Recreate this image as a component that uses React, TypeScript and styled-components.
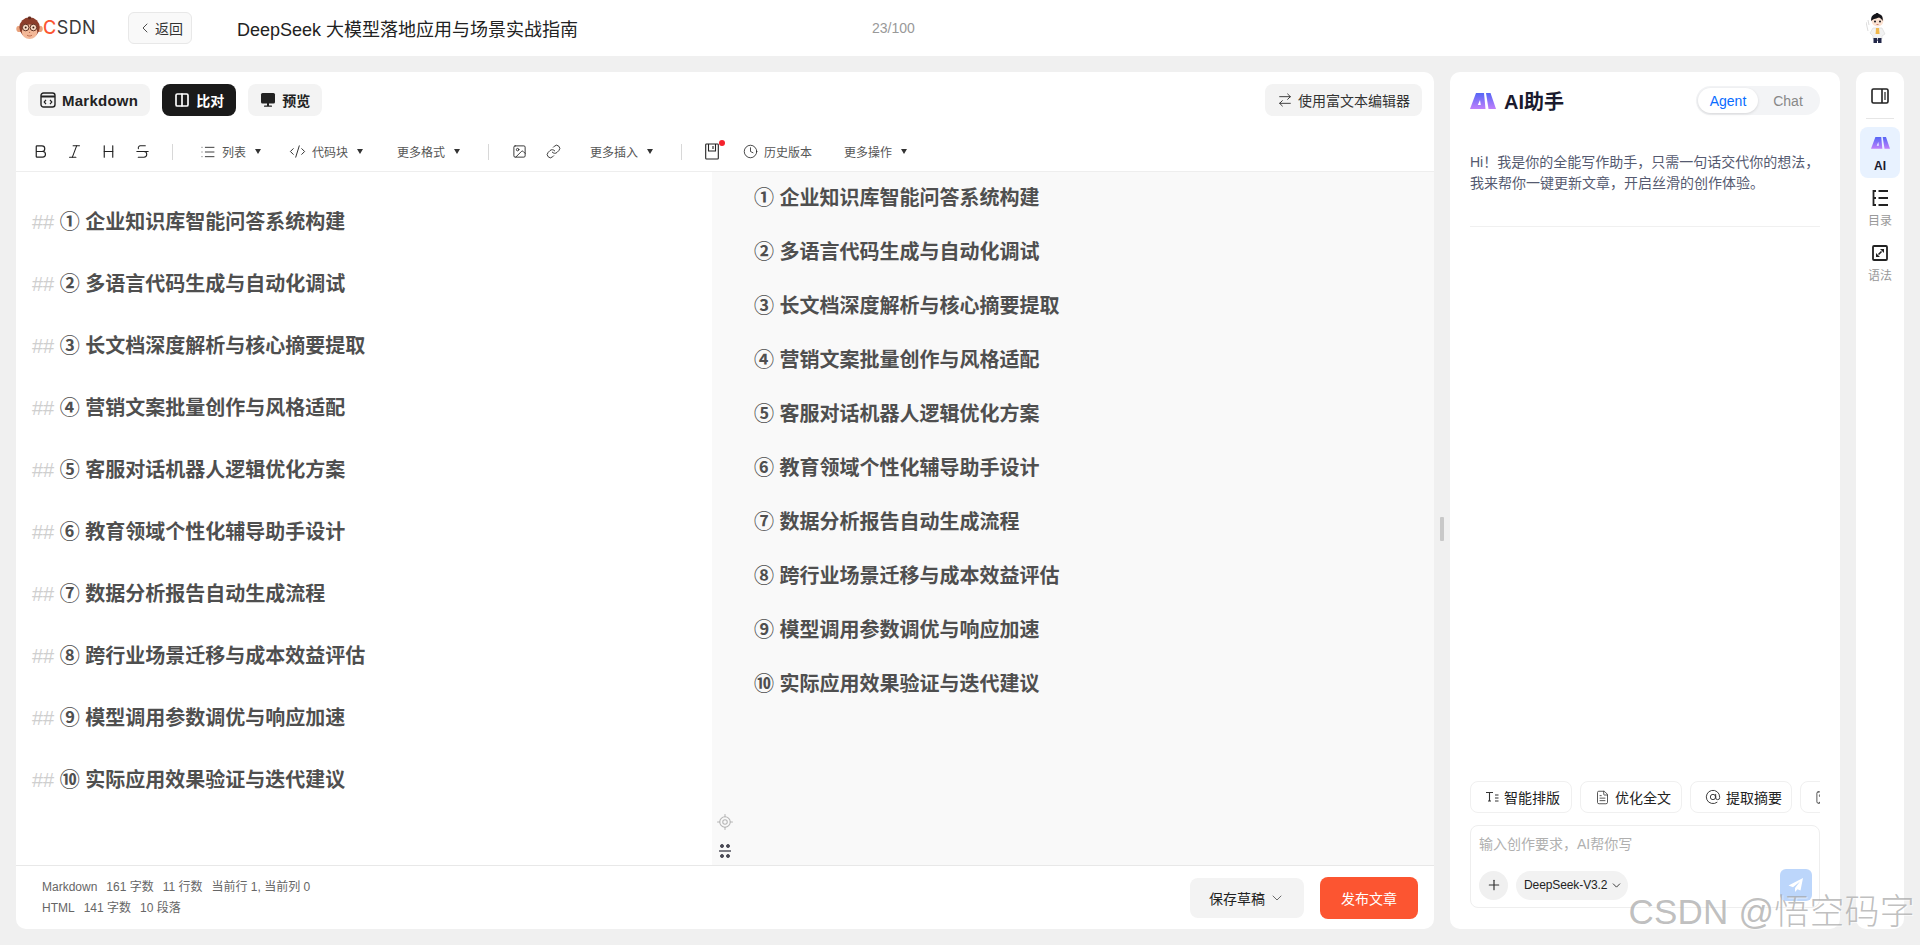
import React from 'react';
import styled, { createGlobalStyle } from 'styled-components';
import {
  AtSign, Bold, ChevronDown, ChevronLeft, Clock, CodeXml, Columns2, FileText, Heading, Image,
  Italic, Link, List, LocateFixed, Plus, Strikethrough, ArrowRightLeft,
} from 'lucide-react';

const GlobalStyle = createGlobalStyle`
  html, body { margin: 0; padding: 0; height: 100%; background: #f0f0f0; }
  body { font-family: "Liberation Sans", "Noto Sans CJK SC", sans-serif; color: #222; overflow: hidden; }
  * { box-sizing: border-box; }
`;

const Page = styled.div`
  position: relative;
  height: 945px;
  display: flex;
  flex-direction: column;
  overflow: hidden;
`;

const Header = styled.header`
  height: 56px;
  flex: none;
  background: #fff;
  display: flex;
  align-items: center;
  padding: 0 32px 0 16px;
`;

const Logo = styled.div`
  width: 80px;
  height: 24px;
  display: flex;
  align-items: center;
`;

const LogoText = styled.span`
  font-family: "Inter", sans-serif;
  font-size: 18px;
  line-height: 24px;
  color: #3a3a3a;
  letter-spacing: 0.4px;
  em { font-style: normal; color: #fc5531; font-weight: 500; }
`;

const BackButton = styled.div`
  width: 64px;
  height: 32px;
  margin-left: 32px;
  border: 1px solid #e8e8e8;
  border-radius: 6px;
  background: #f9f9f9;
  display: flex;
  align-items: center;
  justify-content: center;
  gap: 2px;
  font-size: 14px;
  color: #333;
`;

const TitleField = styled.div`
  width: 635px;
  margin-left: 45px;
  font-size: 18px;
  color: #222;
`;

const TitleCount = styled.span`
  font-size: 14px;
  color: #999;
`;

const AvatarSlot = styled.div`
  margin-left: auto;
  width: 22px;
  height: 32px;
`;

const Main = styled.main`
  flex: 1;
  min-height: 0;
  display: flex;
  gap: 16px;
  padding: 16px;
`;

const EditorCard = styled.section`
  width: 1418px;
  background: #fff;
  border-radius: 10px;
  display: flex;
  flex-direction: column;
  overflow: hidden;
`;

const TabRow = styled.div`
  flex: none;
  height: 61px;
  padding: 12px 12px 0;
  display: flex;
  align-items: flex-start;
  gap: 12px;
`;

const TabButton = styled.div<{ $active?: boolean }>`
  height: 32px;
  padding: 0 12px;
  border-radius: 8px;
  display: flex;
  align-items: center;
  gap: 6px;
  font-size: 14px;
  font-weight: 700;
  background: ${(p) => (p.$active ? '#1a1a1a' : '#f3f3f3')};
  color: ${(p) => (p.$active ? '#fff' : '#222')};
`;

const MarkdownLabel = styled.span`
  font-size: 15px;
  letter-spacing: 0.25px;
`;

const SwitchEditor = styled(TabButton)`
  margin-left: auto;
  width: 157px;
  font-weight: 400;
  color: #333;
  padding: 0 11px 0 12px;
  gap: 5px;
`;

const Toolbar = styled.div`
  flex: none;
  height: 39px;
  padding: 0 0 1px 7px;
  display: flex;
  align-items: center;
  border-bottom: 1px solid #eeeeee;
`;

const ToolIcon = styled.div<{ $ml?: number }>`
  position: relative;
  width: 34px;
  height: 20px;
  margin-left: ${(p) => p.$ml ?? 0}px;
  display: flex;
  align-items: center;
  justify-content: center;
  color: #222;
`;

const ToolDivider = styled.div<{ $ml: number }>`
  width: 1px;
  height: 16px;
  background: #d8d8d8;
  margin-left: ${(p) => p.$ml}px;
`;

const ToolGroup = styled.div<{ $ml: number }>`
  display: flex;
  align-items: center;
  gap: 6px;
  margin-left: ${(p) => p.$ml}px;
  font-size: 12px;
  color: #555;
  svg { color: #222; }
`;

const Caret = styled.span`
  width: 0;
  height: 0;
  margin-left: 3px;
  border-left: 3.5px solid transparent;
  border-right: 3.5px solid transparent;
  border-top: 5px solid #333;
`;

const RedDot = styled.span`
  position: absolute;
  top: -2px;
  right: 4px;
  width: 6px;
  height: 6px;
  border-radius: 50%;
  background: #f5222d;
`;

const Split = styled.div`
  flex: 1;
  min-height: 0;
  display: flex;
`;

const SourcePane = styled.div`
  width: 696px;
  padding: 35px 0 0 16px;
  display: flex;
  flex-direction: column;
  gap: 32px;
`;

const PreviewPane = styled.div`
  position: relative;
  flex: 1;
  background: #f9f9f9;
  padding: 11px 0 0 42px;
  display: flex;
  flex-direction: column;
  gap: 24px;
`;

const HeadingLine = styled.div`
  height: 30px;
  line-height: 30px;
  font-size: 20px;
  font-weight: 700;
  color: #4f4f4f;
  span { font-weight: 400; color: #cfcfcf; }
`;

const PaneTools = styled.div`
  position: absolute;
  left: 4px;
  bottom: 6px;
  display: flex;
  flex-direction: column;
  align-items: center;
  gap: 12px;
`;

const Footer = styled.footer`
  flex: none;
  height: 64px;
  border-top: 1px solid #e8e8e8;
  padding: 0 16px 0 26px;
  display: flex;
  align-items: center;
  justify-content: space-between;
`;

const Stats = styled.div`
  display: flex;
  flex-direction: column;
`;

const StatRow = styled.div`
  display: flex;
  gap: 9px;
  font-size: 12px;
  line-height: 21px;
  color: #666;
`;

const FooterActions = styled.div`
  display: flex;
  align-items: center;
  gap: 16px;
`;

const DraftButton = styled.div`
  width: 114px;
  height: 40px;
  border-radius: 8px;
  background: #f3f3f3;
  display: flex;
  align-items: center;
  justify-content: center;
  gap: 4px;
  font-size: 14px;
  color: #222;
  svg { color: #555; }
`;

const PublishButton = styled.div`
  width: 98px;
  height: 42px;
  border-radius: 8px;
  background: #fc5531;
  color: #fff;
  display: flex;
  align-items: center;
  justify-content: center;
  font-size: 14px;
`;

const AiPanel = styled.aside`
  width: 390px;
  background: #fff;
  border-radius: 10px;
  padding: 14px 20px 21px;
  display: flex;
  flex-direction: column;
`;

const AiHead = styled.div`
  height: 29px;
  display: flex;
  align-items: center;
`;

const AiTitle = styled.div`
  margin-left: 8px;
  font-size: 20px;
  font-weight: 700;
  color: #1a1a2e;
`;

const ModeSwitch = styled.div`
  margin-left: auto;
  width: 124px;
  height: 29px;
  padding: 2px;
  border-radius: 15px;
  background: #f3f4f6;
  display: flex;
  align-items: center;
`;

const ModeOption = styled.div<{ $on?: boolean }>`
  width: 60px;
  height: 25px;
  border-radius: 13px;
  display: flex;
  align-items: center;
  justify-content: center;
  font-size: 14px;
  color: ${(p) => (p.$on ? '#0a6cff' : '#888')};
  background: ${(p) => (p.$on ? '#fff' : 'transparent')};
  box-shadow: ${(p) => (p.$on ? '0 1px 3px rgba(0,0,0,.12)' : 'none')};
`;

const Intro = styled.p`
  margin: 37px 0 0;
  padding-bottom: 32px;
  font-size: 14px;
  line-height: 21px;
  color: #555a70;
  border-bottom: 1px solid #f0f0f0;
`;

const Spacer = styled.div`
  flex: 1;
`;

const ChipRow = styled.div`
  display: flex;
  gap: 8px;
  overflow: hidden;
`;

const Chip = styled.div`
  flex: none;
  width: 102px;
  height: 32px;
  padding-left: 14px;
  border: 1px solid #f0f0f0;
  border-radius: 8px;
  display: flex;
  align-items: center;
  gap: 5px;
  font-size: 14px;
  color: #222;
  svg { color: #333; flex: none; }
`;

const PromptBox = styled.div`
  margin-top: 12px;
  height: 83px;
  padding: 8px 7px 6px 8px;
  border: 1px solid #eeeeee;
  border-radius: 8px;
  display: flex;
  flex-direction: column;
  justify-content: space-between;
`;

const Placeholder = styled.div`
  font-size: 14px;
  line-height: 20px;
  color: #b0b0b0;
`;

const PromptControls = styled.div`
  display: flex;
  align-items: center;
  gap: 8px;
`;

const PlusCircle = styled.div`
  width: 29px;
  height: 29px;
  border-radius: 50%;
  background: #f0f0f0;
  display: flex;
  align-items: center;
  justify-content: center;
  color: #333;
`;

const ModelPill = styled.div`
  width: 112px;
  height: 29px;
  padding-left: 8px;
  border-radius: 15px;
  background: #f2f2f2;
  display: flex;
  align-items: center;
  gap: 3px;
  font-size: 12px;
  letter-spacing: -0.1px;
  color: #222;
`;

const SendButton = styled.div`
  margin-left: auto;
  width: 32px;
  height: 32px;
  border-radius: 6px;
  background: #bcd6fb;
  display: flex;
  align-items: center;
  justify-content: center;
`;

const Rail = styled.nav`
  width: 48px;
  background: #fff;
  border-radius: 10px;
  padding-top: 15px;
  display: flex;
  flex-direction: column;
  align-items: center;
`;

const RailToggle = styled.div`
  height: 18px;
  display: flex;
  align-items: center;
`;

const RailDivider = styled.div`
  width: 28px;
  height: 1px;
  margin-top: 13px;
  background: #e6e6e6;
`;

const RailActive = styled.div`
  width: 40px;
  height: 51px;
  margin-top: 8px;
  padding-top: 10px;
  border-radius: 8px;
  background: #e8f2ff;
  display: flex;
  flex-direction: column;
  align-items: center;
  gap: 9px;
  font-size: 12px;
  line-height: 16px;
  font-weight: 700;
  color: #1a1a2e;
`;

const RailItem = styled.div`
  margin-top: 12px;
  margin-bottom: 4px;
  display: flex;
  flex-direction: column;
  align-items: center;
  gap: 7px;
  font-size: 12px;
  line-height: 16px;
  color: #999;
`;

const DragHandle = styled.div`
  position: absolute;
  left: 1440px;
  top: 517px;
  width: 4px;
  height: 24px;
  border-radius: 1px;
  background: #c8c8c8;
`;

const Watermark = styled.div`
  position: absolute;
  right: 5px;
  top: 892px;
  font-size: 35px;
  line-height: 40px;
  font-weight: 300;
  letter-spacing: 0.2px;
  white-space: nowrap;
  color: rgba(160, 160, 160, 0.68);
  text-shadow: 1px 1px 1px rgba(255, 255, 255, 0.6);
`;

const headings = [
  '① 企业知识库智能问答系统构建',
  '② 多语言代码生成与自动化调试',
  '③ 长文档深度解析与核心摘要提取',
  '④ 营销文案批量创作与风格适配',
  '⑤ 客服对话机器人逻辑优化方案',
  '⑥ 教育领域个性化辅导助手设计',
  '⑦ 数据分析报告自动生成流程',
  '⑧ 跨行业场景迁移与成本效益评估',
  '⑨ 模型调用参数调优与响应加速',
  '⑩ 实际应用效果验证与迭代建议',
];

const MonkeyLogo = () => (
  <svg width="28" height="24" viewBox="0 0 28 24">
    <circle cx="3.5" cy="13" r="3.2" fill="#e9a27c" />
    <circle cx="24.5" cy="13" r="3.2" fill="#e9a27c" />
    <circle cx="14" cy="11.5" r="10.5" fill="#8b3d2b" />
    <rect x="12.5" y="0" width="3" height="3" rx="1" fill="#5f2a1e" />
    <ellipse cx="14" cy="16" rx="8" ry="7.5" fill="#f3b898" />
    <circle cx="10" cy="11.5" r="3.4" fill="#f6d9c4" stroke="#5a2c1e" strokeWidth="1" />
    <circle cx="18" cy="11.5" r="3.4" fill="#f6d9c4" stroke="#5a2c1e" strokeWidth="1" />
    <circle cx="10" cy="11.5" r="1" fill="#3b1d14" />
    <circle cx="18" cy="11.5" r="1" fill="#3b1d14" />
    <path d="M13.4 16.5h1.2M11.5 19.5c1.5 1 3.5 1 5 0" stroke="#b8664a" strokeWidth="1" fill="none" />
  </svg>
);

const AvatarFigure = () => (
  <svg width="22" height="32" viewBox="0 0 22 32">
    <path d="M0 10l2 9M2 8l1 5" stroke="#ddd" strokeWidth="1" fill="none" />
    <path d="M7 16h9l3 6-3 2v3H7v-3l-3-3z" fill="#f2f2f2" stroke="#d6d6d6" strokeWidth=".6" />
    <path d="M10 16h3l.6 6h-4z" fill="#f0b64a" />
    <path d="M7.5 26H11l.4 3H11v2H7.5zM12 26h3.5v5H12v-2h-.4z" fill="#23284a" />
    <circle cx="11.5" cy="8.5" r="6" fill="#fbe2d2" />
    <path d="M5.2 9c-.6-5 2.5-7 4.3-7 .2-1.3 3-1.3 3.2 0 2.8.3 4.6 3 4 7-1-2-2.4-3-3.7-3.5-1.8 1-5.5 1-7.800 3.5z" fill="#15151b" />
    <circle cx="9" cy="9.5" r="1" fill="#15151b" />
    <circle cx="14" cy="9.5" r="1" fill="#15151b" />
    <path d="M10.5 12.5h2" stroke="#b45a4a" strokeWidth=".7" />
  </svg>
);

const AiMark = ({ size, id }: { size: number; id: string }) => (
  <svg width={size} height={(size * 16) / 26} viewBox="0 0 26 16">
    <defs>
      <linearGradient id={id} x1="0" y1="0" x2="0" y2="1">
        <stop offset="0" stopColor="#5566f6" />
        <stop offset="1" stopColor="#c080fb" />
      </linearGradient>
    </defs>
    <path fillRule="evenodd" d="M6 0h8l1.5 16H0zM10 7L7.8 12h3z" fill={`url(#${id})`} />
    <path d="M16 0h4.5L26 16h-7.5z" fill={`url(#${id})`} />
  </svg>
);

const MarkdownIcon = () => (
  <svg width="16" height="16" viewBox="0 0 16 16" fill="none" stroke="currentColor">
    <rect x="1" y="1" width="14" height="14" rx="2.5" strokeWidth="1.4" />
    <path d="M1 4.5h14" strokeWidth="2" />
    <path d="M6 7.8L4.2 10 6 12.2M10 7.8l1.8 2.2-1.8 2.2" strokeWidth="1.2" />
  </svg>
);

const MonitorFilled = () => (
  <svg width="16" height="16" viewBox="0 0 16 16" fill="currentColor">
    <rect x="1" y="1" width="14" height="10.5" rx="1.5" />
    <rect x="7" y="11" width="2" height="3" />
    <rect x="4" y="13.5" width="8" height="1.2" rx=".5" />
  </svg>
);

const SaveIcon = () => (
  <svg width="14" height="17" viewBox="0 0 14 17" fill="none" stroke="#222" strokeWidth="1.1">
    <path d="M1.5 1h11a.8.8 0 0 1 .8.8v13.4a.8.8 0 0 1-.8.8h-11a.8.8 0 0 1-.8-.8V1.8a.8.8 0 0 1 .8-.8z" />
    <path d="M3.5 1v7h7V1M8 3v3" />
  </svg>
);

const PanelIcon = () => (
  <svg width="18" height="16" viewBox="0 0 18 16" fill="none" stroke="#222" strokeWidth="1.6">
    <rect x="1" y="1" width="16" height="14" rx="1.5" />
    <path d="M11 1v14" />
    <path d="M14 4v8" strokeWidth="1.2" />
  </svg>
);

const TocIcon = () => (
  <svg width="16" height="16" viewBox="0 0 16 16" fill="none" stroke="#222" strokeWidth="1.8">
    <path d="M1.5 0v16" />
    <path d="M1 1h3M1 8h3M1 15h3M6.5 1H16M6.5 8H16M6.5 15H16" />
  </svg>
);

const GrammarIcon = () => (
  <svg width="16" height="16" viewBox="0 0 16 16" fill="none">
    <rect x="1" y="1" width="14" height="14" rx="1" stroke="#222" strokeWidth="1.8" />
    <path d="M12 4H8l4 4zM4 12h4L4 8z" fill="#222" />
    <path d="M9.5 6.5l-3 3" stroke="#222" strokeWidth="1.6" />
  </svg>
);

const SyncIcon = () => (
  <svg width="14" height="16" viewBox="0 0 14 16" fill="#4a4a55" stroke="#4a4a55">
    <circle cx="4" cy="3" r="1.5" />
    <circle cx="10" cy="3" r="1.5" />
    <circle cx="4" cy="13" r="1.5" />
    <circle cx="10" cy="13" r="1.5" />
    <path d="M1 8h12" strokeWidth="1.4" />
  </svg>
);

const LayoutChipIcon = () => (
  <svg width="14" height="14" viewBox="0 0 14 14" fill="none" stroke="#333" strokeWidth="1.1">
    <path d="M1 2.5h7M4.5 2.5V11M3 11h3M10 5h3.5M10 8h3.5M10 11h3.5" />
  </svg>
);

const SendIcon = () => (
  <svg width="18" height="18" viewBox="0 0 18 18" fill="#fff">
    <path d="M16 2L1.5 9.5l4.5 1.7L13 5.5l-5 6.5v4l2.5-2.8 3 1.3z" />
  </svg>
);

export default function App() {
  return (
    <Page>
      <GlobalStyle />
      <Header>
        <Logo>
          <MonkeyLogo />
          <LogoText><em>C</em>SDN</LogoText>
        </Logo>
        <BackButton><ChevronLeft size={16} strokeWidth={1.3} />返回</BackButton>
        <TitleField>DeepSeek 大模型落地应用与场景实战指南</TitleField>
        <TitleCount>23/100</TitleCount>
        <AvatarSlot><AvatarFigure /></AvatarSlot>
      </Header>
      <Main>
        <EditorCard>
          <TabRow>
            <TabButton><MarkdownIcon /><MarkdownLabel>Markdown</MarkdownLabel></TabButton>
            <TabButton $active><Columns2 size={16} strokeWidth={2.5} />比对</TabButton>
            <TabButton><MonitorFilled />预览</TabButton>
            <SwitchEditor><ArrowRightLeft size={16} strokeWidth={1.4} />使用富文本编辑器</SwitchEditor>
          </TabRow>
          <Toolbar>
            <ToolIcon><Bold size={17} strokeWidth={1.7} /></ToolIcon>
            <ToolIcon><Italic size={17} strokeWidth={1.5} /></ToolIcon>
            <ToolIcon><Heading size={17} strokeWidth={1.6} /></ToolIcon>
            <ToolIcon><Strikethrough size={17} strokeWidth={1.5} /></ToolIcon>
            <ToolDivider $ml={13} />
            <ToolGroup $ml={27}><List size={16} strokeWidth={1.3} />列表<Caret /></ToolGroup>
            <ToolGroup $ml={28}><CodeXml size={17} strokeWidth={1.3} />代码块<Caret /></ToolGroup>
            <ToolGroup $ml={34}>更多格式<Caret /></ToolGroup>
            <ToolDivider $ml={28} />
            <ToolIcon $ml={13}><Image size={15} strokeWidth={1.4} /></ToolIcon>
            <ToolIcon><Link size={15} strokeWidth={1.4} /></ToolIcon>
            <ToolGroup $ml={20}>更多插入<Caret /></ToolGroup>
            <ToolDivider $ml={28} />
            <ToolIcon $ml={13}><SaveIcon /><RedDot /></ToolIcon>
            <ToolGroup $ml={14}><Clock size={15} strokeWidth={1.3} />历史版本</ToolGroup>
            <ToolGroup $ml={32}>更多操作<Caret /></ToolGroup>
          </Toolbar>
          <Split>
            <SourcePane>
              {headings.map((h) => (
                <HeadingLine key={h}><span>## </span>{h}</HeadingLine>
              ))}
            </SourcePane>
            <PreviewPane>
              {headings.map((h) => (
                <HeadingLine key={h}>{h}</HeadingLine>
              ))}
              <PaneTools>
                <LocateFixed size={18} color="#b5b5b5" strokeWidth={1.4} />
                <SyncIcon />
              </PaneTools>
            </PreviewPane>
          </Split>
          <Footer>
            <Stats>
              <StatRow>
                <span>Markdown</span><span>161 字数</span><span>11 行数</span><span>当前行 1, 当前列 0</span>
              </StatRow>
              <StatRow>
                <span>HTML</span><span>141 字数</span><span>10 段落</span>
              </StatRow>
            </Stats>
            <FooterActions>
              <DraftButton>保存草稿<ChevronDown size={16} strokeWidth={1.3} /></DraftButton>
              <PublishButton>发布文章</PublishButton>
            </FooterActions>
          </Footer>
        </EditorCard>
        <AiPanel>
          <AiHead>
            <AiMark size={26} id="ai-mark-head" />
            <AiTitle>AI助手</AiTitle>
            <ModeSwitch>
              <ModeOption $on>Agent</ModeOption>
              <ModeOption>Chat</ModeOption>
            </ModeSwitch>
          </AiHead>
          <Intro>Hi！我是你的全能写作助手，只需一句话交代你的想法，我来帮你一键更新文章，开启丝滑的创作体验。</Intro>
          <Spacer />
          <ChipRow>
            <Chip><LayoutChipIcon />智能排版</Chip>
            <Chip><FileText size={15} strokeWidth={1.3} />优化全文</Chip>
            <Chip><AtSign size={16} strokeWidth={1.4} />提取摘要</Chip>
            <Chip><Image size={15} strokeWidth={1.3} /></Chip>
          </ChipRow>
          <PromptBox>
            <Placeholder>输入创作要求，AI帮你写</Placeholder>
            <PromptControls>
              <PlusCircle><Plus size={16} strokeWidth={1.8} /></PlusCircle>
              <ModelPill>DeepSeek-V3.2<ChevronDown size={13} strokeWidth={1.6} /></ModelPill>
              <SendButton><SendIcon /></SendButton>
            </PromptControls>
          </PromptBox>
        </AiPanel>
        <Rail>
          <RailToggle><PanelIcon /></RailToggle>
          <RailDivider />
          <RailActive><AiMark size={19} id="ai-mark-rail" />AI</RailActive>
          <RailItem><TocIcon />目录</RailItem>
          <RailItem><GrammarIcon />语法</RailItem>
        </Rail>
      </Main>
      <DragHandle />
      <Watermark>CSDN @悟空码字</Watermark>
    </Page>
  );
}
